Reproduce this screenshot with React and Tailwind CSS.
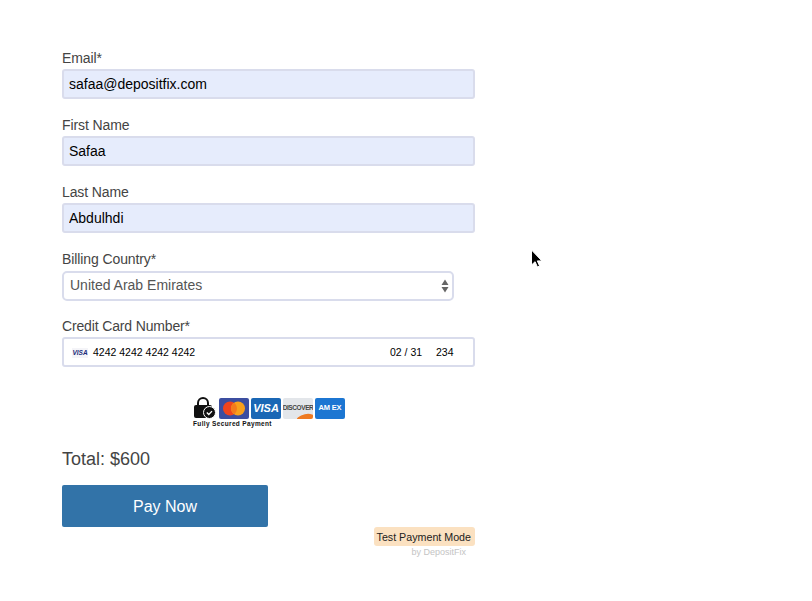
import React from 'react';

const font = { fontFamily: '"Liberation Sans", Arial, sans-serif' };

function TextField({ label, value }) {
  return (
    <div className="mb-[17px]">
      <label className="block h-[20px] text-[14px] leading-[18px] tracking-[-0.1px] text-[#444]">{label}</label>
      <input
        readOnly
        value={value}
        className="block h-[30px] w-[413px] rounded-[3px] border-2 border-[#d9dcec] bg-[#e6ecfc] px-[5px] text-[14px] text-black outline-none"
      />
    </div>
  );
}

function CardLogos() {
  return (
    <div className="ml-[131px] mt-[30px] h-[32px] w-[155px]">
      <div className="flex h-[22px] items-center">
        {/* lock with check */}
        <svg className="mr-[3px] h-[22px] w-[23px]" viewBox="0 0 23 22">
          <path d="M5 9V6a5 5 0 0 1 10 0v3" fill="none" stroke="#111" strokeWidth="2" />
          <rect x="1" y="8" width="18" height="13" rx="2" fill="#111" />
          <circle cx="16.5" cy="15.5" r="6" fill="#111" stroke="#fff" strokeWidth="1" />
          <path d="M13.8 15.5l2 2 3.2-3.4" fill="none" stroke="#fff" strokeWidth="1.3" />
        </svg>
        {/* mastercard */}
        <svg className="mr-[2px] h-[21px] w-[30px]" viewBox="0 0 30 21">
          <rect width="30" height="21" rx="2" fill="#3c4ea0" />
          <circle cx="11" cy="10.5" r="7" fill="#f0441d" />
          <circle cx="19" cy="10.5" r="7" fill="#f9a01b" />
          <path d="M15 4.8a7 7 0 0 1 0 11.4a7 7 0 0 1 0-11.4z" fill="#f57a1c" />
        </svg>
        <div className="mr-[2px] flex h-[21px] w-[30px] items-center justify-center rounded-[2px] bg-[#1a67b5] text-[11px] font-bold italic text-white">VISA</div>
        <div className="relative mr-[2px] flex h-[21px] w-[30px] items-center justify-center overflow-hidden rounded-[2px] bg-[#e3e6ea] text-[6.5px] font-bold tracking-[-0.4px] text-[#444]">
          <span className="absolute -bottom-[7px] -right-[3px] h-[12px] w-[20px] -rotate-12 rounded-[50%] bg-[#ee7a22]" />
          <span className="relative mb-[1px]">DISCOVER</span>
        </div>
        <div className="flex h-[21px] w-[30px] items-center justify-center rounded-[2px] bg-[#1c76d2] text-[7.5px] font-bold tracking-[-0.2px] text-white">AM EX</div>
      </div>
      <div className="mt-[1px] whitespace-nowrap text-[6.5px] font-bold leading-[8px] tracking-[0.35px] text-[#111]">Fully Secured Payment</div>
    </div>
  );
}

export default function App() {
  return (
    <div className="relative h-[601px] w-[812px] overflow-hidden bg-white pl-[62px] pt-[49px]" style={font}>
      <TextField label="Email*" value="safaa@depositfix.com" />
      <TextField label="First Name" value="Safaa" />
      <TextField label="Last Name" value="Abdulhdi" />

      <div className="mb-[16px]">
        <label className="block h-[21px] text-[14px] leading-[18px] tracking-[-0.1px] text-[#444]">Billing Country*</label>
        <div className="flex h-[30px] w-[392px] items-center justify-between rounded-[5px] border-2 border-[#d9dcec] bg-white pl-[6px] pr-[3px] text-[14px] text-[#555]">
          <span className="mb-[1px]">United Arab Emirates</span>
          <svg className="h-[14px] w-[8px]" viewBox="0 0 8 14">
            <path d="M4 0.5L7.5 6H0.5zM4 13.5L0.5 8h7z" fill="#666" />
          </svg>
        </div>
      </div>

      <div>
        <label className="block h-[20px] text-[14px] leading-[18px] tracking-[-0.15px] text-[#444]">Credit Card Number*</label>
        <div className="flex h-[30px] w-[413px] items-center rounded-[3px] border-2 border-[#d9dcec] bg-white pl-[8px] pt-[2px] text-[10.5px] text-black">
          <span className="mr-[5px] flex h-[10px] w-[16px] items-center justify-center bg-[#f4f4f8] text-[6.5px] font-bold italic text-[#1a2a78]">VISA</span>
          <span className="w-[297px]">4242 4242 4242 4242</span>
          <span className="w-[46px]">02 / 31</span>
          <span>234</span>
        </div>
      </div>

      <CardLogos />

      <div className="mt-[18px] text-[18px] leading-[24px] text-[#444]">Total: $600</div>

      <button className="mt-[14px] block h-[42px] w-[206px] rounded-[2px] bg-[#3273a8] pt-[2px] text-[16px] text-white">Pay Now</button>

      <div className="w-[413px]">
        <div className="ml-auto w-fit">
          <div className="rounded-[3px] bg-[#fbe1c1] pl-[3px] pr-[4px] pt-[1px] text-[10.7px] leading-[18px] text-[#222]">Test Payment Mode</div>
        </div>
        <div className="pr-[9px] text-right text-[9px] leading-[12px] text-[#c4c4c4]">by DepositFix</div>
      </div>

      {/* mouse pointer from the recording */}
      <svg className="absolute left-[530px] top-[249px] h-[22px] w-[14px]" viewBox="0 0 14 22">
        <path d="M1.5 1v15l3.6-3.3 2.3 5.3 2.2-1-2.3-5.1h4.6z" fill="#000" stroke="#fff" strokeWidth="1" />
      </svg>
    </div>
  );
}
